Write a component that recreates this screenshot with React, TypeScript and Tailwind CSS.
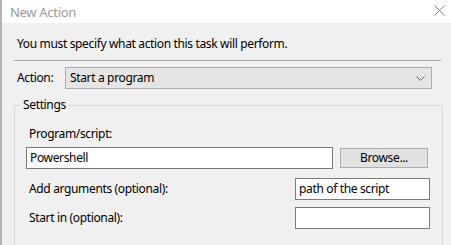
import React from "react";

export default function App() {
  return (
    <div
      className="w-[451px] h-[245px] flex overflow-hidden bg-[#f0f0f0] text-black"
      style={{ fontFamily: '"Noto Sans", "Open Sans", sans-serif' }}
    >
      <div className="w-[2px] shrink-0 bg-[#b5b5b0]" />
      <div className="flex-1 flex flex-col">
        <div className="h-[23px] shrink-0 bg-white flex items-center justify-between pl-[8px] pr-[6px]">
          <span className="text-[13px] leading-[16px] text-[#9a9a9a] tracking-[-0.3px]">New Action</span>
          <svg width="11" height="11" viewBox="0 0 11 11" className="mb-[2px]">
            <path d="M0.5 0.5 L10.5 10.5 M10.5 0.5 L0.5 10.5" stroke="#8a8a8a" strokeWidth="1" fill="none" />
          </svg>
        </div>
        <div className="flex-1 flex flex-col pl-[12px] text-[12px] tracking-[-0.35px]">
          <div className="mt-[13px] leading-[16px] pl-[3px]">You must specify what action this task will perform.</div>
          <div className="mt-[8px] h-[1px] w-[427px] bg-[#a8a8a8]" />
          <div className="mt-[6px] flex items-center h-[22px]">
            <span className="w-[51px] pl-[3px] leading-[16px]">Action:</span>
            <div className="w-[367px] h-[22px] border border-[#adadad] bg-[#e5e5e5] flex items-center justify-between pl-[4px] pr-[6px]">
              <span className="leading-[16px]">Start a program</span>
              <svg width="9" height="5" viewBox="0 0 9 5">
                <path d="M0.5 0.5 L4.5 4.5 L8.5 0.5" stroke="#606060" strokeWidth="1" fill="none" />
              </svg>
            </div>
          </div>
          <fieldset className="mt-[8px] w-[429px] border border-[#d9d9d9] pl-[11px] pr-[12px] pb-[40px]">
            <legend className="ml-[-5px] px-[2px] leading-[16px]">Settings</legend>
            <div className="mt-[13px] pl-[3px] leading-[16px]">Program/script:</div>
            <div className="mt-[5px] flex items-center gap-[7px]">
              <div className="w-[307px] h-[22px] border border-[#7a7a7a] bg-white flex items-center pl-[3px] leading-[16px]">
                Powershell
              </div>
              <div className="w-[88px] h-[20px] border border-[#adadad] bg-[#e1e1e1] flex items-center justify-center leading-[16px]">
                Browse...
              </div>
            </div>
            <div className="mt-[9px] flex items-center justify-between">
              <span className="pl-[3px] leading-[16px]">Add arguments (optional):</span>
              <div className="w-[135px] h-[22px] border border-[#7a7a7a] bg-white flex items-center pl-[3px] leading-[16px]">
                path of the script
              </div>
            </div>
            <div className="mt-[7px] flex items-center justify-between">
              <span className="pl-[3px] leading-[16px]">Start in (optional):</span>
              <div className="w-[135px] h-[22px] border border-[#7a7a7a] bg-white" />
            </div>
          </fieldset>
        </div>
      </div>
    </div>
  );
}
